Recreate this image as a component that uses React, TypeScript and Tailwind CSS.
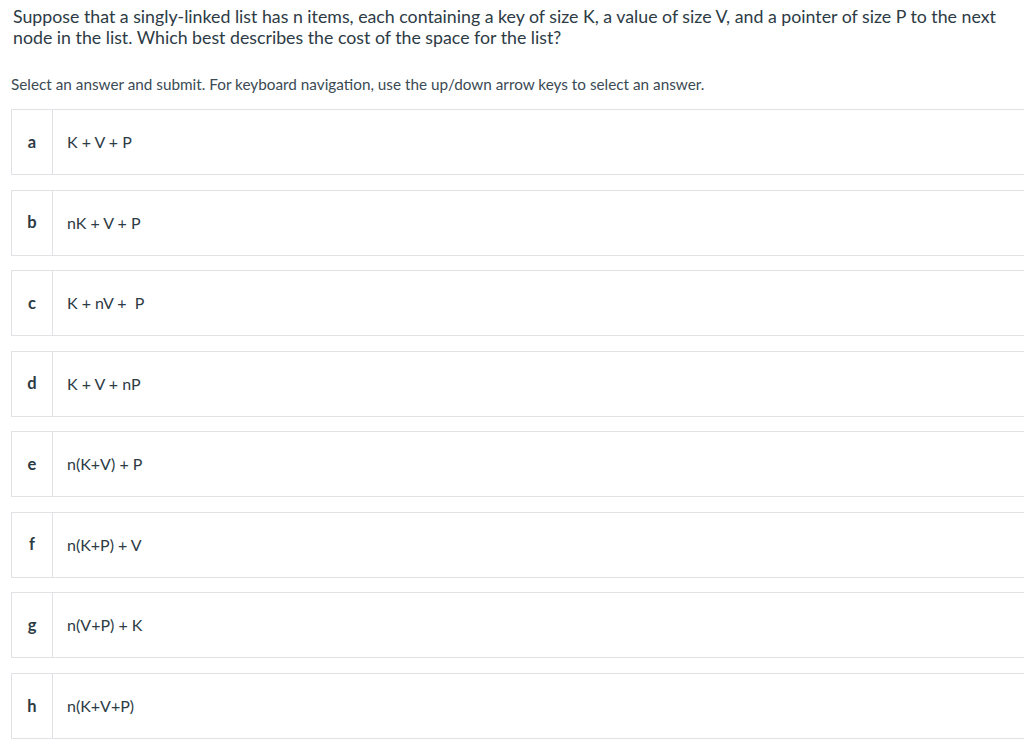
const options = [
  { key: "a", text: "K + V + P" },
  { key: "b", text: "nK + V + P" },
  { key: "c", text: "K + nV +  P" },
  { key: "d", text: "K + V + nP" },
  { key: "e", text: "n(K+V) + P" },
  { key: "f", text: "n(K+P) + V" },
  { key: "g", text: "n(V+P) + K" },
  { key: "h", text: "n(K+V+P)" },
];

export default function App() {
  return (
    <div
      className="h-[744px] w-[1024px] overflow-hidden bg-white text-[#2d3b45]"
      style={{ fontFamily: "Lato, 'Noto Sans', sans-serif" }}
    >
      <p className="whitespace-pre-wrap pl-[13px] pt-[6px] text-[17.75px] leading-[21px]">
        Suppose that a singly-linked list has n items, each containing a key of size K, a value of size V, and a pointer of size P to the next{"\n"}node in the list. Which best describes the cost of the space for the list?
      </p>
      <p className="mt-[26px] pl-[11px] text-[15.3px] leading-[20px] text-[#3b4a54]">
        Select an answer and submit. For keyboard navigation, use the up/down arrow keys to select an answer.
      </p>
      <ul className="mt-[15px] flex flex-col gap-[14.57px] pl-[11px]">
        {options.map((o) => (
          <li
            key={o.key}
            className="flex h-[66px] border-y border-l border-[#e0e2e5]"
          >
            <div className="flex w-[41px] shrink-0 items-center justify-center border-r border-[#e0e2e5] text-[16.5px] font-bold text-[#2d3b45]">
              {o.key}
            </div>
            <div className="flex items-center whitespace-pre pl-[14px] text-[16px] text-[#2d3b45]">
              {o.text}
            </div>
          </li>
        ))}
      </ul>
    </div>
  );
}
